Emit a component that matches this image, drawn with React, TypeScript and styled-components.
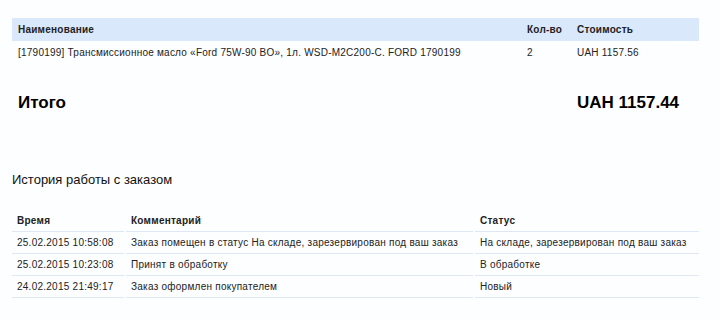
import React from 'react';
import styled, {createGlobalStyle} from 'styled-components';

const GlobalStyle = createGlobalStyle`
    html, body {
        margin: 0;
        padding: 0;
        background: #fdfeff;
    }
    body {
        font-family: "Liberation Sans", Arial, sans-serif;
        color: #222;
    }
`

type CellPropsType = {
    bold?: boolean
}

export default function App() {
    const items = [
        {
            name: '[1790199] Трансмиссионное масло «Ford 75W-90 BO», 1л. WSD-M2C200-C. FORD 1790199',
            qty: '2', price: 'UAH 1157.56'
        },
    ];

    const history = [
        {time: '25.02.2015 10:58:08', comment: 'Заказ помещен в статус На складе, зарезервирован под ваш заказ', status: 'На складе, зарезервирован под ваш заказ'},
        {time: '25.02.2015 10:23:08', comment: 'Принят в обработку', status: 'В обработке'},
        {time: '24.02.2015 21:49:17', comment: 'Заказ оформлен покупателем', status: 'Новый'},
    ];

    return (
        <Page>
            <GlobalStyle/>
            <OrderHead>
                <OrderCell bold>Наименование</OrderCell>
                <OrderCell bold>Кол-во</OrderCell>
                <OrderCell bold>Стоимость</OrderCell>
            </OrderHead>
            {items.map(item => (
                <OrderRow key={item.name}>
                    <OrderCell>{item.name}</OrderCell>
                    <OrderCell>{item.qty}</OrderCell>
                    <OrderCell>{item.price}</OrderCell>
                </OrderRow>
            ))}
            <TotalRow>
                <TotalLabel>Итого</TotalLabel>
                <span/>
                <TotalLabel>UAH 1157.44</TotalLabel>
            </TotalRow>

            <HistoryTitle>История работы с заказом</HistoryTitle>
            <HistoryGrid>
                <HistoryCell bold>Время</HistoryCell>
                <HistoryCell bold>Комментарий</HistoryCell>
                <HistoryCell bold>Статус</HistoryCell>
                {history.map(row => (
                    <React.Fragment key={row.time}>
                        <HistoryCell>{row.time}</HistoryCell>
                        <HistoryCell>{row.comment}</HistoryCell>
                        <HistoryCell>{row.status}</HistoryCell>
                    </React.Fragment>
                ))}
            </HistoryGrid>
        </Page>
    );
}

const Page = styled.div`
    padding: 18px 21px 0 12px;
`

const OrderRow = styled.div`
    display: grid;
    grid-template-columns: 509px 50px 128px;
    height: 24px;
    align-items: center;
`

const OrderHead = styled(OrderRow)`
    height: 23px;
    background: #dae8fc;
`

const OrderCell = styled.div<CellPropsType>`
    padding-left: 6px;
    font-size: 10px;
    line-height: 12px;
    letter-spacing: 0.23px;
    font-weight: ${(props) => props.bold ? 700 : 400};
    color: #222;
    white-space: nowrap;
`

const TotalRow = styled(OrderRow)`
    height: 30px;
    margin-top: 23px;
`

const TotalLabel = styled.div`
    padding-left: 6px;
    font-size: 17px;
    font-weight: 700;
    color: #000;
`

const HistoryTitle = styled.h3`
    margin: 54px 0 0;
    font-size: 13px;
    line-height: 16px;
    font-weight: 400;
    color: #111;
`

const HistoryGrid = styled.div`
    display: grid;
    grid-template-columns: 112px 347px 224px;
    column-gap: 2px;
    margin-top: 22px;
`

const HistoryCell = styled.div<CellPropsType>`
    height: 21px;
    padding-left: 5px;
    display: flex;
    align-items: center;
    border-bottom: 1px solid #dfe7f5;
    font-size: 10px;
    letter-spacing: 0.25px;
    font-weight: ${(props) => props.bold ? 700 : 400};
    color: #222;
    white-space: nowrap;
`
